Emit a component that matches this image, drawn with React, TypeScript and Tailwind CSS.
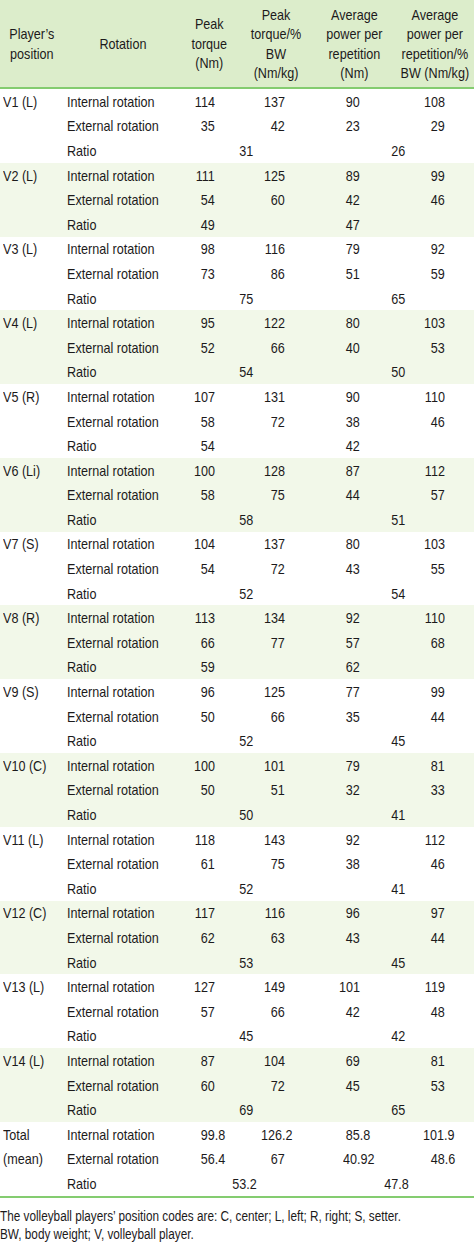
import React from 'react';

// One group = three rows (internal, external, ratio)
interface Group {
  player: string;
  ir: string[];
  er: string[];
  ratio: [string, string];
  spanRatio: boolean; // ratio centred across two columns, or sitting in col 3 / col 5
}

const groups: Group[] = [
  { player: 'V1 (L)', ir: ['114', '137', '90', '108'], er: ['35', '42', '23', '29'], ratio: ['31', '26'], spanRatio: true },
  { player: 'V2 (L)', ir: ['111', '125', '89', '99'], er: ['54', '60', '42', '46'], ratio: ['49', '47'], spanRatio: false },
  { player: 'V3 (L)', ir: ['98', '116', '79', '92'], er: ['73', '86', '51', '59'], ratio: ['75', '65'], spanRatio: true },
  { player: 'V4 (L)', ir: ['95', '122', '80', '103'], er: ['52', '66', '40', '53'], ratio: ['54', '50'], spanRatio: true },
  { player: 'V5 (R)', ir: ['107', '131', '90', '110'], er: ['58', '72', '38', '46'], ratio: ['54', '42'], spanRatio: false },
  { player: 'V6 (Li)', ir: ['100', '128', '87', '112'], er: ['58', '75', '44', '57'], ratio: ['58', '51'], spanRatio: true },
  { player: 'V7 (S)', ir: ['104', '137', '80', '103'], er: ['54', '72', '43', '55'], ratio: ['52', '54'], spanRatio: true },
  { player: 'V8 (R)', ir: ['113', '134', '92', '110'], er: ['66', '77', '57', '68'], ratio: ['59', '62'], spanRatio: false },
  { player: 'V9 (S)', ir: ['96', '125', '77', '99'], er: ['50', '66', '35', '44'], ratio: ['52', '45'], spanRatio: true },
  { player: 'V10 (C)', ir: ['100', '101', '79', '81'], er: ['50', '51', '32', '33'], ratio: ['50', '41'], spanRatio: true },
  { player: 'V11 (L)', ir: ['118', '143', '92', '112'], er: ['61', '75', '38', '46'], ratio: ['52', '41'], spanRatio: true },
  { player: 'V12 (C)', ir: ['117', '116', '96', '97'], er: ['62', '63', '43', '44'], ratio: ['53', '45'], spanRatio: true },
  { player: 'V13 (L)', ir: ['127', '149', '101', '119'], er: ['57', '66', '42', '48'], ratio: ['45', '42'], spanRatio: true },
  { player: 'V14 (L)', ir: ['87', '104', '69', '81'], er: ['60', '72', '45', '53'], ratio: ['69', '65'], spanRatio: true },
];

const cols = 'grid grid-cols-[64px_118px_54px_80px_76px_82px]';
const rowH = 'h-[24.6px] items-center';
// right padding for each number column
const numPad = ['pr-[21px]', 'pr-[31px]', 'pr-[32px]', 'pr-[29px]'];

// condensed look: Liberation Sans squeezed horizontally
function T({ children, o = 'origin-left' }: { children: React.ReactNode; o?: string }) {
  return <span className={`inline-block whitespace-nowrap scale-x-[0.84] ${o}`}>{children}</span>;
}

function Row({ first, label, values, pads }: { first?: string; label: string; values: string[]; pads?: string[] }) {
  return (
    <div className={`${cols} ${rowH}`}>
      <div className="pl-[3px]">{first && <T>{first}</T>}</div>
      <div className="pl-[3px]"><T>{label}</T></div>
      {values.map((v, i) => (
        <div key={i} className={`text-right ${(pads || numPad)[i]}`}><T o="origin-right">{v}</T></div>
      ))}
    </div>
  );
}

function RatioRow({ ratio, span, left = 'pr-[6px]', right = 'pl-[6px]' }: { ratio: [string, string]; span: boolean; left?: string; right?: string }) {
  return (
    <div className={`${cols} ${rowH}`}>
      <div />
      <div className="pl-[3px]"><T>Ratio</T></div>
      {span ? (
        <>
          <div className={`col-span-2 text-center ${left}`}><T o="origin-center">{ratio[0]}</T></div>
          <div className={`col-span-2 text-center ${right}`}><T o="origin-center">{ratio[1]}</T></div>
        </>
      ) : (
        <>
          <div className="text-right pr-[21px]"><T o="origin-right">{ratio[0]}</T></div>
          <div />
          <div className="text-right pr-[32px]"><T o="origin-right">{ratio[1]}</T></div>
          <div />
        </>
      )}
    </div>
  );
}

function Head({ lines, className = '' }: { lines: string[]; className?: string }) {
  return (
    <div className={className}>
      <T o="origin-center">
        {lines.map((l, i) => (
          <React.Fragment key={i}>
            {i > 0 && <br />}
            {l}
          </React.Fragment>
        ))}
      </T>
    </div>
  );
}

export default function App() {
  return (
    <div className="w-[474px] overflow-hidden bg-white text-[#1c1a1b] text-[15px] leading-none font-['Liberation_Sans','Arial',sans-serif]">
      {/* header */}
      <div className={`${cols} h-[87px] bg-[#dcedcb] items-center text-center leading-[19.5px]`}>
        <Head lines={['Player’s', 'position']} />
        <Head lines={['Rotation']} />
        <Head lines={['Peak', 'torque', '(Nm)']} />
        <Head lines={['Peak', 'torque/%', 'BW', '(Nm/kg)']} />
        <Head lines={['Average', 'power per', 'repetition', '(Nm)']} />
        <Head lines={['Average', 'power per', 'repetition/%', 'BW (Nm/kg)']} className="pl-[2px]" />
      </div>
      <div className="h-[2px] bg-[#84cc70]" />

      {/* body */}
      <div>
        {groups.map((g, idx) => (
          <div key={idx} className={idx % 2 === 1 ? 'bg-[#f2f8e9]' : 'bg-white'}>
            <Row first={g.player} label="Internal rotation" values={g.ir} />
            <Row label="External rotation" values={g.er} />
            <RatioRow ratio={g.ratio} span={g.spanRatio} />
          </div>
        ))}
        <div className="bg-white">
          <Row
            first="Total"
            label="Internal rotation"
            values={['99.8', '126.2', '85.8', '101.9']}
            pads={['pr-[11px]', 'pr-[23px]', 'pr-[22px]', 'pr-[19px]']}
          />
          <Row
            first="(mean)"
            label="External rotation"
            values={['56.4', '67', '40.92', '48.6']}
            pads={['pr-[11px]', 'pr-[31px]', 'pr-[17px]', 'pr-[19px]']}
          />
          <RatioRow ratio={['53.2', '47.8']} span left="pr-[8px]" right="pl-[3px]" />
        </div>
      </div>
      <div className="h-[2px] bg-[#84cc70]" />

      {/* footnote */}
      <div className="pt-[9px] text-[14px] leading-[18px]">
        <p><T>The volleyball players’ position codes are: C, center; L, left; R, right; S, setter.</T></p>
        <p><T>BW, body weight; V, volleyball player.</T></p>
      </div>
    </div>
  );
}
